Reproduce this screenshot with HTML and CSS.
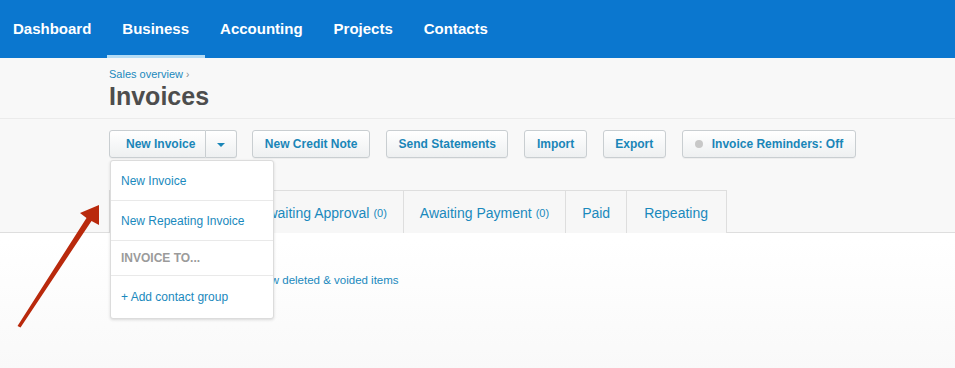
FILE: index.html
```html
<!DOCTYPE html>
<html lang="en">
<head>
  <meta charset="UTF-8">
  <meta name="viewport" content="width=device-width, initial-scale=1">
  <title>Invoices</title>
  <link rel="stylesheet" href="styles.css">
</head>
<body>

  <nav class="topnav">
    <a class="navitem" href="#">Dashboard</a>
    <a class="navitem active" href="#">Business</a>
    <a class="navitem" href="#">Accounting</a>
    <a class="navitem" href="#">Projects</a>
    <a class="navitem" href="#">Contacts</a>
  </nav>

  <div class="page-head">
    <div class="title-block">
      <a class="crumb" href="#">Sales overview <span class="crumb-sep">&rsaquo;</span></a>
      <h1>Invoices</h1>
    </div>

    <div class="toolbar">
      <div class="split">
        <button class="btn btn-main">New Invoice</button>
        <button class="btn btn-caret"><span class="caret"></span></button>

        <!-- menu open over the tabs -->
        <ul class="menu">
          <li class="menu-item"><a href="#">New Invoice</a></li>
          <li class="menu-item"><a href="#">New Repeating Invoice</a></li>
          <li class="menu-head">INVOICE TO...</li>
          <li class="menu-item last"><a href="#">+ Add contact group</a></li>
        </ul>
      </div>
      <button class="btn">New Credit Note</button>
      <button class="btn">Send Statements</button>
      <button class="btn">Import</button>
      <button class="btn">Export</button>
      <button class="btn btn-remind"><span class="dot"></span>Invoice Reminders: Off</button>
    </div>

    <div class="tabs">
      <a class="tab" href="#">All</a>
      <a class="tab" href="#">Draft <small>(0)</small></a>
      <a class="tab" href="#">Awaiting Approval <small>(0)</small></a>
      <a class="tab" href="#">Awaiting Payment <small>(0)</small></a>
      <a class="tab" href="#">Paid</a>
      <a class="tab" href="#">Repeating</a>
    </div>
  </div>

  <div class="content">
    <span class="count">0 items</span>
    <a class="show-deleted" href="#">Show deleted &amp; voided items</a>
  </div>

  <svg class="arrow" width="120" height="340" viewBox="0 0 120 340">
    <polygon points="99,205 80,213 86.5,218 17.5,326 20.5,327.5 91.5,221 99,225" fill="#b9290c"/>
  </svg>

</body>
</html>
```

FILE: styles.css
```css
body {
  font-family: 'Liberation Sans', Arial, Helvetica, sans-serif;
  margin: 0;
  padding: 0;
  min-height: 368px;
  background: linear-gradient(#ffffff 240px, #f9f9f9 368px);
  position: relative;
  overflow: hidden;
}

a {
  text-decoration: none;
  color: #1a89bd;
}

.topnav {
  display: flex;
  height: 58px;
  background-color: #0b77cf;
}

.navitem {
  display: flex;
  align-items: center;
  padding: 1px 15.5px 0;
  border-bottom: 3px solid transparent;
  color: #ffffff;
  font-size: 15px;
  font-weight: bold;
}

.navitem:first-child {
  padding-left: 13px;
}

.navitem.active {
  border-bottom-color: #b5dcf5;
}

.page-head {
  background-color: #f8f8f8;
  border-bottom: 1px solid #dedede;
}

.title-block {
  padding: 9px 0 8px 109px;
  border-bottom: 1px solid #ebebeb;
}

.crumb {
  display: block;
  font-size: 11px;
  line-height: 14px;
}

.crumb-sep {
  color: #888;
  font-size: 10px;
}

h1 {
  margin: 0;
  font-size: 25px;
  line-height: 28px;
  color: #4d4d4d;
}

.toolbar {
  display: flex;
  gap: 16px;
  padding: 11px 0 32px 109px;
}

.split {
  display: flex;
  position: relative;
  margin-right: -1px;
}

.btn {
  height: 28px;
  padding: 0 11.5px;
  font-family: inherit;
  font-size: 12px;
  font-weight: bold;
  color: #1a86b8;
  background: linear-gradient(#ffffff, #eef0f1);
  border: 1px solid #c9ced1;
  border-radius: 3px;
  box-shadow: 0 1px 0 rgba(0, 0, 0, 0.04);
  cursor: pointer;
}

.btn-main {
  padding: 0 10px 0 16px;
  border-radius: 3px 0 0 3px;
}

.btn-caret {
  width: 31px;
  padding: 0;
  border-left: none;
  border-radius: 0 3px 3px 0;
  display: flex;
  align-items: center;
  justify-content: center;
}

.caret {
  margin-top: 2px;
  border-left: 4px solid transparent;
  border-right: 4px solid transparent;
  border-top: 4px solid #1a86b8;
}

.btn-remind {
  display: flex;
  align-items: center;
  padding: 0 12px;
}

.dot {
  width: 8px;
  height: 8px;
  border-radius: 50%;
  background-color: #c8c8c8;
  margin-right: 9px;
}

.menu {
  position: absolute;
  top: 30px;
  left: 1px;
  width: 162px;
  margin: 0;
  padding: 0;
  list-style: none;
  background-color: #ffffff;
  border: 1px solid #dcdcdc;
  border-radius: 3px;
  box-shadow: 0 1px 3px rgba(0, 0, 0, 0.14);
  z-index: 5;
}

.menu-item a {
  display: block;
  padding: 13px 10px 12px;
  line-height: 14px;
  font-size: 12px;
}

.menu-item {
  border-bottom: 1px solid #e9e9e9;
}

.menu-item.last {
  border-bottom: none;
}

.menu-item.last a {
  padding: 14px 10px 14px;
}

.menu-head {
  padding: 10px 10px 10px;
  line-height: 14px;
  font-size: 12px;
  font-weight: bold;
  color: #9b9b9b;
  border-bottom: 1px solid #e9e9e9;
}

.tabs {
  display: flex;
  padding-left: 109px;
  margin-bottom: -1px;
}

.tab {
  height: 41px;
  display: flex;
  align-items: center;
  padding: 1px 16px 0;
  font-size: 14px;
  border: 1px solid #dedede;
  border-left: none;
  border-bottom: none;
  background-color: #f7f7f7;
}

.tab:first-child {
  padding: 1px 17px 0 18px;
  border-left: 1px solid #dedede;
}

.tab:last-child {
  padding: 1px 18px 0 17px;
}

.tab small {
  font-size: 11px;
  margin-left: 4px;
}

.content {
  padding: 40px 0 0 114px;
  font-size: 11.5px;
  line-height: 14px;
}

.count {
  color: #555;
  margin-right: 96px;
}

.arrow {
  position: absolute;
  left: 0;
  top: 0;
  pointer-events: none;
}
```
